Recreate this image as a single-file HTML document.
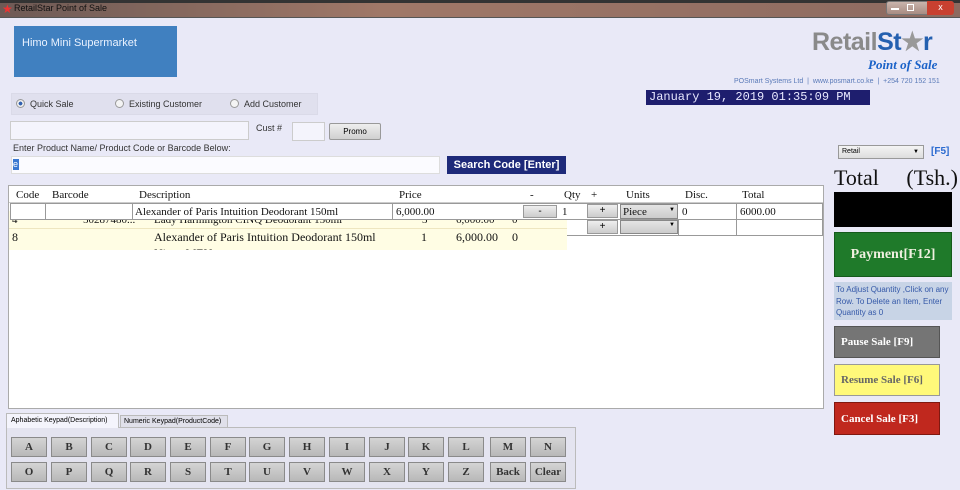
<!DOCTYPE html>
<html><head><style>
*{box-sizing:border-box;margin:0;padding:0}
body{width:960px;height:490px;overflow:hidden;background:#e9e9f7;font-family:"Liberation Sans",sans-serif;position:relative}
.a{position:absolute}
.serif{font-family:"Liberation Serif",serif}
.key{position:absolute;width:36px;height:20px;background:linear-gradient(#d4d4d4,#b8b8b8);border:1px solid #8a8a8a;font-family:"Liberation Serif",serif;font-size:11px;font-weight:bold;color:#333;text-align:center;line-height:18px}
.cell{position:absolute;font-family:"Liberation Serif",serif;font-size:11px;color:#111;white-space:nowrap}
.radio{display:inline-block;width:9px;height:9px;border:1px solid #999;border-radius:50%;background:#f4f4f4;vertical-align:-1px;margin-right:5px;position:relative}
.btn{position:absolute;color:#fff;font-family:"Liberation Serif",serif;font-weight:bold;font-size:11px;padding-left:6px}
</style></head><body>
<div class="a" style="left:0;top:0;width:960px;height:18px;background:linear-gradient(90deg,#6e5a55,#a07868 40%,#8c6a60);border-bottom:1px solid #555"></div>
<div class="a" style="left:0;top:0;width:960px;height:3px;background:#333"></div>
<div class="a" style="left:2px;top:2px;font-size:12px;color:#e33">★</div>
<div class="a" style="left:14px;top:3px;font-size:9px;color:#111">RetailStar Point of Sale</div>
<div class="a" style="left:886px;top:1px;width:68px;height:14px;border:1px solid #777;border-radius:3px;background:linear-gradient(#c9b4ac,#a88c82)"></div>
<div class="a" style="left:891px;top:8px;width:8px;height:2px;background:#fff"></div>
<div class="a" style="left:907px;top:4px;width:7px;height:7px;border:1px solid #fff"></div>
<div class="a" style="left:927px;top:1px;width:27px;height:14px;background:#c84030;border-radius:0 3px 3px 0;color:#fff;font-size:9px;text-align:center;line-height:13px">x</div>

<div class="a" style="left:14px;top:26px;width:163px;height:51px;background:#4080c0;color:#eaf2ff;font-size:11px;padding:11px 8px">Himo Mini Supermarket</div>

<div class="a" style="left:812px;top:27px;font-size:25px;font-weight:bold;color:#8a8a8a;letter-spacing:-0.5px">Retail<span style="color:#2460b0">St</span><span style="color:#999">★</span><span style="color:#2460b0">r</span></div>
<div class="a serif" style="left:868px;top:57px;font-size:13px;font-weight:bold;font-style:italic;color:#1a62c8">Point of Sale</div>
<div class="a" style="left:734px;top:78px;font-size:7px;color:#5a7ab8">POSmart Systems Ltd &nbsp;| &nbsp;www.posmart.co.ke &nbsp;| &nbsp;+254 720 152 151</div>
<div class="a" style="left:646px;top:90px;width:224px;height:15px;background:#1e1e6e;color:#e8e8ff;font-family:'Liberation Mono',monospace;font-size:12px;line-height:15px;padding-left:3px">January 19, 2019 01:35:09 PM</div>

<div class="a" style="left:11px;top:93px;width:307px;height:22px;background:#e0e0ee;border:1px solid #dadae8"></div>
<div class="a" style="left:16px;top:99px;font-size:9px;color:#333"><span class="radio" style="background:radial-gradient(#3060b0 35%,#eee 40%)"></span>Quick Sale</div>
<div class="a" style="left:115px;top:99px;font-size:9px;color:#333"><span class="radio"></span>Existing Customer</div>
<div class="a" style="left:230px;top:99px;font-size:9px;color:#333"><span class="radio"></span>Add Customer</div>

<div class="a" style="left:10px;top:121px;width:239px;height:19px;background:#f4f4fc;border:1px solid #ccc"></div>
<div class="a" style="left:256px;top:123px;font-size:9px;color:#333">Cust #</div>
<div class="a" style="left:292px;top:122px;width:33px;height:19px;background:#f4f4fc;border:1px solid #ccc"></div>
<div class="a" style="left:329px;top:123px;width:52px;height:17px;background:linear-gradient(#eee,#d0d0d0);border:1px solid #999;border-radius:2px;font-size:8px;text-align:center;line-height:15px">Promo</div>
<div class="a" style="left:13px;top:143px;font-size:9px;color:#333">Enter Product Name/ Product Code or Barcode Below:</div>
<div class="a" style="left:11px;top:156px;width:429px;height:18px;background:#fbfbff;border:1px solid #ddd"></div>
<div class="a" style="left:13px;top:159px;width:6px;height:11px;background:#3a78d0;color:#fff;font-size:9px;line-height:11px">e</div>
<div class="a" style="left:447px;top:156px;width:119px;height:18px;background:#1e2a7a;color:#fff;font-size:11px;font-weight:bold;text-align:center;line-height:18px">Search Code [Enter]</div>

<div class="a" style="left:8px;top:185px;width:816px;height:224px;background:#fff;border:1px solid #aaa"></div>
<div class="a" style="left:9px;top:186px;width:814px;height:17px;border-bottom:1px solid #ccc"></div>
<div class="cell" style="left:16px;top:189px">Code</div>
<div class="cell" style="left:52px;top:189px">Barcode</div>
<div class="cell" style="left:139px;top:189px">Description</div>
<div class="cell" style="left:399px;top:189px">Price</div>
<div class="cell" style="left:530px;top:189px">-</div>
<div class="cell" style="left:564px;top:189px">Qty</div>
<div class="cell" style="left:591px;top:189px">+</div>
<div class="cell" style="left:626px;top:189px">Units</div>
<div class="cell" style="left:685px;top:189px">Disc.</div>
<div class="cell" style="left:742px;top:189px">Total</div>

<div class="a" style="left:520px;top:219px;width:303px;height:17px;border:1px solid #999"></div>
<div class="a" style="left:587px;top:220px;width:31px;height:14px;background:linear-gradient(#eee,#ccc);border:1px solid #999;font-size:10px;text-align:center;line-height:12px">+</div>
<div class="a" style="left:620px;top:220px;width:58px;height:14px;background:linear-gradient(#e4e4e4,#ccc);border:1px solid #888"></div>
<div class="a" style="left:669px;top:222px;font-size:6px">▼</div>
<div class="a" style="left:678px;top:220px;width:1px;height:15px;background:#999"></div>
<div class="a" style="left:736px;top:220px;width:1px;height:15px;background:#999"></div>

<div class="a" style="left:9px;top:211px;width:558px;height:39px;background:#fffde4;overflow:hidden">
 <div class="cell" style="left:3px;top:3px">4</div><div class="cell" style="left:74px;top:3px">50287480...</div><div class="cell" style="left:145px;top:3px">Lady Harmington CINQ Deodorant 150ml</div><div class="cell" style="left:413px;top:3px">3</div><div class="cell" style="left:447px;top:3px">6,000.00</div><div class="cell" style="left:503px;top:3px">0</div>
 <div class="a" style="left:0;top:17px;width:558px;height:1px;background:#eee6c0"></div>
 <div class="cell" style="left:3px;top:19px;font-size:12px">8</div><div class="cell" style="left:145px;top:19px;font-size:12px">Alexander of Paris Intuition Deodorant 150ml</div><div class="cell" style="left:412px;top:19px;font-size:12px">1</div><div class="cell" style="left:447px;top:19px;font-size:12px">6,000.00</div><div class="cell" style="left:503px;top:19px;font-size:12px">0</div>
 <div class="cell" style="left:145px;top:35px;font-size:12px">Nivea MEN ....</div>
</div>

<div class="a" style="left:10px;top:203px;width:813px;height:17px;background:#fff;border:1px solid #999"></div>
<div class="a" style="left:45px;top:204px;width:1px;height:15px;background:#999"></div>
<div class="a" style="left:132px;top:204px;width:1px;height:15px;background:#999"></div>
<div class="a" style="left:392px;top:204px;width:1px;height:15px;background:#999"></div>
<div class="cell" style="left:135px;top:206px;font-size:11px">Alexander of Paris Intuition Deodorant 150ml</div>
<div class="cell" style="left:396px;top:206px">6,000.00</div>
<div class="a" style="left:523px;top:205px;width:34px;height:13px;background:linear-gradient(#eee,#ccc);border:1px solid #999;font-size:10px;text-align:center;line-height:11px">-</div>
<div class="cell" style="left:562px;top:206px">1</div>
<div class="a" style="left:587px;top:204px;width:31px;height:14px;background:linear-gradient(#eee,#ccc);border:1px solid #999;font-size:10px;text-align:center;line-height:12px">+</div>
<div class="a" style="left:620px;top:204px;width:58px;height:15px;background:linear-gradient(#e4e4e4,#ccc);border:1px solid #888"></div>
<div class="cell" style="left:623px;top:206px">Piece</div>
<div class="a" style="left:669px;top:207px;font-size:6px">▼</div>
<div class="cell" style="left:682px;top:206px">0</div>
<div class="a" style="left:736px;top:204px;width:1px;height:15px;background:#999"></div>
<div class="cell" style="left:740px;top:206px">6000.00</div>

<div class="a" style="left:6px;top:427px;width:570px;height:62px;background:#e4e4f0;border:1px solid #bbb"></div>
<div class="a" style="left:6px;top:413px;width:113px;height:15px;background:#f4f4fc;border:1px solid #bbb;border-bottom:none;font-size:7px;line-height:14px;padding-left:4px">Aphabetic Keypad(Description)</div>
<div class="a" style="left:120px;top:415px;width:108px;height:13px;background:#e0e0ea;border:1px solid #bbb;font-size:7px;line-height:12px;padding-left:3px">Numeric Keypad(ProductCode)</div>
<div class="key" style="left:11px;top:437px">A</div><div class="key" style="left:51px;top:437px">B</div><div class="key" style="left:91px;top:437px">C</div><div class="key" style="left:130px;top:437px">D</div><div class="key" style="left:170px;top:437px">E</div><div class="key" style="left:210px;top:437px">F</div><div class="key" style="left:249px;top:437px">G</div><div class="key" style="left:289px;top:437px">H</div><div class="key" style="left:329px;top:437px">I</div><div class="key" style="left:369px;top:437px">J</div><div class="key" style="left:408px;top:437px">K</div><div class="key" style="left:448px;top:437px">L</div><div class="key" style="left:490px;top:437px">M</div><div class="key" style="left:530px;top:437px">N</div>
<div class="key" style="left:11px;top:462px">O</div><div class="key" style="left:51px;top:462px">P</div><div class="key" style="left:91px;top:462px">Q</div><div class="key" style="left:130px;top:462px">R</div><div class="key" style="left:170px;top:462px">S</div><div class="key" style="left:210px;top:462px">T</div><div class="key" style="left:249px;top:462px">U</div><div class="key" style="left:289px;top:462px">V</div><div class="key" style="left:329px;top:462px">W</div><div class="key" style="left:369px;top:462px">X</div><div class="key" style="left:408px;top:462px">Y</div><div class="key" style="left:448px;top:462px">Z</div><div class="key" style="left:490px;top:462px">Back</div><div class="key" style="left:530px;top:462px">Clear</div>

<div class="a" style="left:838px;top:145px;width:86px;height:14px;background:linear-gradient(#f4f4f4,#ddd);border:1px solid #999;font-size:7px;line-height:12px;padding-left:3px">Retail<span style="position:absolute;right:4px;font-size:6px">▼</span></div>
<div class="a" style="left:931px;top:146px;font-size:10px;font-weight:bold;color:#2a6ad0">[F5]</div>
<div class="a serif" style="left:834px;top:165px;font-size:22px;color:#111;white-space:nowrap">Total &nbsp;&nbsp;&nbsp;&nbsp;(Tsh.)</div>
<div class="a" style="left:834px;top:192px;width:118px;height:35px;background:#000"></div>
<div class="a serif" style="left:834px;top:232px;width:118px;height:45px;background:#1f7a2a;border:1px solid #155a1c;color:#f0f0e0;font-weight:bold;font-size:14px;text-align:center;line-height:44px">Payment[F12]</div>
<div class="a" style="left:834px;top:282px;width:118px;height:38px;background:#c8d4e6;color:#3458a8;font-size:8px;line-height:11.5px;padding:2px 2px">To Adjust Quantity ,Click on any Row. To Delete an Item, Enter Quantity as 0</div>
<div class="btn" style="left:834px;top:326px;width:106px;height:32px;background:#757575;border:1px solid #555;line-height:31px">Pause Sale [F9]</div>
<div class="btn" style="left:834px;top:364px;width:106px;height:32px;background:#fff97a;border:1px solid #999;color:#666;line-height:31px">Resume Sale [F6]</div>
<div class="btn" style="left:834px;top:402px;width:106px;height:33px;background:#c0281e;border:1px solid #801810;line-height:32px">Cancel Sale [F3]</div>
</body></html>
